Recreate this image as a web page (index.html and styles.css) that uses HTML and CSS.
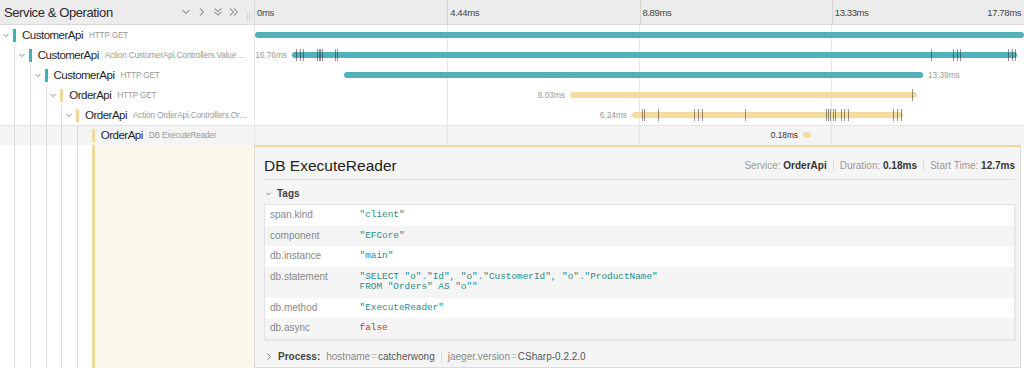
FILE: index.html
```html
<!DOCTYPE html>
<html lang="en">
<head>
    <meta charset="UTF-8">
    <title>Trace timeline</title>
    <link rel="stylesheet" href="styles.css">
</head>
<body>
    <div class="trace">
        <div class="head">
            <div class="head-name">
                <span class="head-title">Service &amp; Operation</span>
                <div class="head-tools">
                    <svg viewBox="0 0 10 10"><polyline points="1.5,3 5,6.5 8.5,3"/></svg>
                    <svg viewBox="0 0 10 10"><polyline points="3,1.5 6.5,5 3,8.5"/></svg>
                    <svg viewBox="0 0 10 10"><polyline points="1.5,1.5 5,4.5 8.5,1.5"/><polyline points="1.5,5 5,8 8.5,5"/></svg>
                    <svg viewBox="0 0 10 10"><polyline points="1,1.5 4.5,5 1,8.5"/><polyline points="5,1.5 8.5,5 5,8.5"/></svg>
                </div>
                <span class="grip"></span>
            </div>
            <div class="head-ticks">
                <div class="tick"><span>0ms</span></div>
                <div class="tick"><span>4.44ms</span></div>
                <div class="tick"><span>8.89ms</span></div>
                <div class="tick"><span>13.33ms</span><span>17.78ms</span></div>
            </div>
        </div>

        <!-- span rows -->
        <div class="row">
            <div class="span-name">
                <span class="toggle"><svg viewBox="0 0 6 5"><polyline points="0.5,1 3,3.6 5.5,1"/></svg></span>
                <span class="accent teal"></span>
                <span class="svc">CustomerApi</span>
                <span class="op">HTTP GET</span>
            </div>
            <div class="timeline">
                <div class="bar teal" style="left: 0%; width: 100%;"></div>
            </div>
        </div>

        <div class="row">
            <div class="span-name">
                <span class="indent"></span>
                <span class="toggle"><svg viewBox="0 0 6 5"><polyline points="0.5,1 3,3.6 5.5,1"/></svg></span>
                <span class="accent teal"></span>
                <span class="svc">CustomerApi</span>
                <span class="op">Action CustomerApi.Controllers.Value…</span>
            </div>
            <div class="timeline">
                <div class="bar teal" style="left: 4.81%; width: 94.28%;">
                    <span class="dur before">16.76ms</span>
                    <i class="log" style="left: 3.7px;"></i>
                    <i class="log" style="left: 7.7px;"></i>
                    <i class="log" style="left: 11.3px;"></i>
                    <i class="log" style="left: 25.5px;"></i>
                    <i class="log" style="left: 27px;"></i>
                    <i class="log" style="left: 28.5px;"></i>
                    <i class="log" style="left: 30px;"></i>
                    <i class="log" style="left: 43.5px;"></i>
                    <i class="log" style="left: 45px;"></i>
                    <i class="log" style="left: 639px;"></i>
                    <i class="log" style="left: 661.3px;"></i>
                    <i class="log" style="left: 664.7px;"></i>
                    <i class="log" style="left: 668px;"></i>
                    <i class="log" style="left: 716.3px;"></i>
                    <i class="log" style="left: 720px;"></i>
                    <i class="log" style="left: 723.5px;"></i>
                </div>
            </div>
        </div>

        <div class="row">
            <div class="span-name">
                <span class="indent"></span><span class="indent"></span>
                <span class="toggle"><svg viewBox="0 0 6 5"><polyline points="0.5,1 3,3.6 5.5,1"/></svg></span>
                <span class="accent teal"></span>
                <span class="svc">CustomerApi</span>
                <span class="op">HTTP GET</span>
            </div>
            <div class="timeline">
                <div class="bar teal" style="left: 11.57%; width: 75.29%;">
                    <span class="dur after">13.39ms</span>
                </div>
            </div>
        </div>

        <div class="row">
            <div class="span-name">
                <span class="indent"></span><span class="indent"></span><span class="indent"></span>
                <span class="toggle"><svg viewBox="0 0 6 5"><polyline points="0.5,1 3,3.6 5.5,1"/></svg></span>
                <span class="accent sand"></span>
                <span class="svc">OrderApi</span>
                <span class="op">HTTP GET</span>
            </div>
            <div class="timeline">
                <div class="bar sand" style="left: 40.96%; width: 45.12%;">
                    <span class="dur before">8.03ms</span>
                    <i class="log" style="left: 341.7px;"></i>
                </div>
            </div>
        </div>

        <div class="row">
            <div class="span-name">
                <span class="indent"></span><span class="indent"></span><span class="indent"></span><span class="indent"></span>
                <span class="toggle"><svg viewBox="0 0 6 5"><polyline points="0.5,1 3,3.6 5.5,1"/></svg></span>
                <span class="accent sand"></span>
                <span class="svc">OrderApi</span>
                <span class="op">Action OrderApi.Controllers.Or…</span>
            </div>
            <div class="timeline">
                <div class="bar sand" style="left: 49.02%; width: 35.24%;">
                    <span class="dur before">6.24ms</span>
                    <i class="log" style="left: 9.7px;"></i>
                    <i class="log" style="left: 12px;"></i>
                    <i class="log" style="left: 26px;"></i>
                    <i class="log" style="left: 62px;"></i>
                    <i class="log" style="left: 66px;"></i>
                    <i class="log" style="left: 70px;"></i>
                    <i class="log" style="left: 113px;"></i>
                    <i class="log" style="left: 194px;"></i>
                    <i class="log" style="left: 196px;"></i>
                    <i class="log" style="left: 198px;"></i>
                    <i class="log" style="left: 201px;"></i>
                    <i class="log" style="left: 203px;"></i>
                    <i class="log" style="left: 209px;"></i>
                    <i class="log" style="left: 212px;"></i>
                    <i class="log" style="left: 216px;"></i>
                    <i class="log" style="left: 261px;"></i>
                    <i class="log" style="left: 265px;"></i>
                    <i class="log" style="left: 269px;"></i>
                </div>
            </div>
        </div>

        <div class="row selected">
            <div class="span-name">
                <span class="indent"></span><span class="indent"></span><span class="indent"></span><span class="indent"></span><span class="indent"></span>
                <span class="toggle"></span>
                <span class="accent sand"></span>
                <span class="svc">OrderApi</span>
                <span class="op">DB ExecuteReader</span>
            </div>
            <div class="timeline">
                <div class="bar sand" style="left: 71.26%; width: 1.04%;">
                    <span class="dur before">0.18ms</span>
                </div>
            </div>
        </div>

        <!-- expanded span detail -->
        <div class="detail">
            <div class="detail-side">
                <span class="indent"></span><span class="indent"></span><span class="indent"></span><span class="indent"></span><span class="indent"></span>
                <span class="side-gap"></span>
                <span class="side-accent"></span>
                <span class="side-fill"></span>
            </div>
            <div class="panel">
                <div class="panel-head">
                    <h2 class="panel-title">DB ExecuteReader</h2>
                    <div class="meta">
                        <span class="meta-item">Service: <b>OrderApi</b></span>
                        <span class="meta-item">Duration: <b>0.18ms</b></span>
                        <span class="meta-item">Start Time: <b>12.7ms</b></span>
                    </div>
                </div>

                <div class="section-head">
                    <svg viewBox="0 0 5 4"><polyline points="0.5,0.7 2.5,3 4.5,0.7"/></svg>
                    Tags
                </div>
                <table class="kv">
                    <tr><td class="key">span.kind</td><td class="val">"client"</td></tr>
                    <tr><td class="key">component</td><td class="val">"EFCore"</td></tr>
                    <tr><td class="key">db.instance</td><td class="val">"main"</td></tr>
                    <tr><td class="key">db.statement</td><td class="val">"SELECT "o"."Id", "o"."CustomerId", "o"."ProductName"
FROM "Orders" AS "o""</td></tr>
                    <tr><td class="key">db.method</td><td class="val">"ExecuteReader"</td></tr>
                    <tr><td class="key">db.async</td><td class="val bool">false</td></tr>
                </table>

                <div class="process">
                    <svg viewBox="0 0 4 7"><polyline points="0.6,0.5 3.4,3.5 0.6,6.5"/></svg>
                    <b>Process:</b>
                    <span class="pair"><span class="k">hostname</span><span class="eq">=</span><span class="v">catcherwong</span></span>
                    <span class="pair"><span class="k">jaeger.version</span><span class="eq">=</span><span class="v">CSharp-0.2.2.0</span></span>
                </div>
            </div>
        </div>
    </div>
</body>
</html>
```

FILE: styles.css
```css
* {
    box-sizing: border-box;
}

body {
    margin: 0;
    background: #fff;
    font-family: "Liberation Sans", Arial, sans-serif;
    color: #333;
    overflow: hidden;
}

.trace {
    width: 1024px;
}

/* header */
.head {
    display: flex;
    height: 25px;
    background: #ececec;
    border-bottom: 1px solid #d9d9d9;
}

.head-name {
    width: 255px;
    flex: none;
    display: flex;
    align-items: center;
    padding-left: 4px;
    border-right: 1px solid #dcdcdc;
}

.head-title {
    font-size: 13px;
    letter-spacing: -0.4px;
    color: #2b2b2b;
}

.head-tools {
    margin-left: auto;
    display: flex;
    gap: 6px;
}

.head-tools svg {
    width: 10px;
    height: 10px;
    fill: none;
    stroke: #9a9a9a;
    stroke-width: 1.1;
}

.grip {
    width: 3px;
    height: 7px;
    border-left: 1px solid #cfcfcf;
    border-right: 1px solid #cfcfcf;
    margin: 0 4px 3px 8px;
    align-self: flex-end;
}

.head-ticks {
    flex: 1;
    display: grid;
    grid-template-columns: repeat(4, 1fr);
}

.tick {
    display: flex;
    align-items: center;
    justify-content: space-between;
    padding: 0 3px 0 2px;
    border-left: 1px solid #d6d6d6;
    font-size: 9.5px;
    letter-spacing: -0.4px;
    color: #444;
}

.tick:first-child {
    border-left: 0;
}

/* span rows */
.row {
    display: flex;
    height: 20px;
}

.row.selected {
    background: #f4f4f4;
    box-shadow: inset 0 1px #e3e3e3;
}

.span-name {
    width: 255px;
    flex: none;
    display: flex;
    align-items: center;
    padding-right: 4px;
    border-right: 1px solid #e6e6e6;
    white-space: nowrap;
    overflow: hidden;
}

.indent {
    width: 15.75px;
    flex: none;
    align-self: stretch;
    background: linear-gradient(#dcdcdc, #dcdcdc) 14px 0 / 1px 100% no-repeat;
}

.toggle {
    width: 13px;
    flex: none;
    display: flex;
    padding-left: 3px;
}

.toggle svg {
    width: 6px;
    height: 5px;
    fill: none;
    stroke: #8c8c8c;
    stroke-width: 1;
}

.accent {
    width: 3px;
    height: 13px;
    flex: none;
    margin-right: 6px;
}

.accent.teal {
    background: #45adb4;
}

.accent.sand {
    background: #f3d79c;
}

.svc {
    font-size: 11.5px;
    letter-spacing: -0.5px;
    color: #1f1f1f;
}

.op {
    min-width: 0;
    margin-left: 6px;
    font-size: 8.2px;
    letter-spacing: -0.15px;
    color: #999;
    overflow: hidden;
    text-overflow: ellipsis;
}

/* timeline */
.timeline {
    flex: 1;
    position: relative;
    background:
        linear-gradient(#e6e6e6, #e6e6e6) 192px 0 / 1px 100% no-repeat,
        linear-gradient(#e6e6e6, #e6e6e6) 384px 0 / 1px 100% no-repeat,
        linear-gradient(#e6e6e6, #e6e6e6) 576px 0 / 1px 100% no-repeat;
}

.bar {
    position: absolute;
    top: 7px;
    height: 6px;
    border-radius: 3px;
}

.bar.teal {
    background: #50b1b8;
}

.bar.sand {
    background: #f4dba4;
}

.dur {
    position: absolute;
    top: -3px;
    line-height: 12px;
    font-size: 8.3px;
    color: #9a9a9a;
    white-space: nowrap;
}

.dur.before {
    right: 100%;
    margin-right: 5px;
}

.dur.after {
    left: 100%;
    margin-left: 5px;
}

.selected .dur {
    color: #333;
}

.log {
    position: absolute;
    top: -3px;
    width: 1px;
    height: 12px;
    background: rgba(40, 40, 40, 0.5);
}

/* detail */
.detail {
    display: flex;
}

.detail-side {
    width: 255px;
    flex: none;
    display: flex;
    border-right: 1px solid #dcdcdc;
}

.side-gap {
    width: 13px;
    flex: none;
}

.side-accent {
    width: 3px;
    flex: none;
    background: #f3d89c;
}

.side-fill {
    flex: 1;
    background: #fbf7eb;
}

.panel {
    flex: 1;
    margin-right: 3px;
    padding: 0 5px 4px 9px;
    background: #f5f5f5;
    border-top: 2px solid #f3d89c;
    border-right: 1px solid #dadada;
    border-bottom: 1px solid #dadada;
}

.panel-head {
    display: flex;
    align-items: center;
    justify-content: space-between;
    padding: 10px 0 4px;
    border-bottom: 1px solid #dedede;
}

.panel-title {
    margin: 0;
    font-size: 15.5px;
    line-height: 18px;
    font-weight: normal;
    color: #222;
}

.meta {
    display: flex;
    align-items: center;
    font-size: 10px;
    line-height: 10px;
    color: #999;
}

.meta b {
    color: #333;
}

.meta-item + .meta-item {
    margin-left: 6px;
    padding-left: 6px;
    border-left: 1px solid #dcdcdc;
}

.section-head {
    display: flex;
    align-items: center;
    margin-top: 8px;
    font-size: 10px;
    line-height: 12px;
    font-weight: bold;
    color: #444;
}

.section-head svg {
    width: 5px;
    height: 4px;
    margin: 0 6px 0 2px;
    fill: none;
    stroke: #888;
    stroke-width: 1;
}

.kv {
    width: 100%;
    margin-top: 4px;
    border-collapse: collapse;
    table-layout: fixed;
    background: #fff;
    border: 1px solid #e2e2e2;
    box-shadow: 1px 1px 2px rgba(0, 0, 0, 0.06);
}

.kv td {
    padding: 5px;
    line-height: 10.5px;
    vertical-align: top;
}

.kv tr:nth-child(even) td {
    background: #f5f5f5;
}

.kv .key {
    width: 90px;
    font-size: 10px;
    color: #888;
}

.kv .val {
    font-family: "Liberation Mono", monospace;
    font-size: 9.4px;
    color: #2c8a8a;
    white-space: pre;
}

.kv td.val.bool {
    color: #cc2f2f;
}

.process {
    display: flex;
    align-items: center;
    margin-top: 11px;
    font-size: 10px;
    line-height: 12px;
}

.process svg {
    width: 4px;
    height: 7px;
    margin: 0 7px 0 3px;
    fill: none;
    stroke: #777;
    stroke-width: 1;
}

.process b {
    color: #444;
    margin-right: 6px;
}

.pair .k {
    color: #888;
}

.pair .eq {
    margin: 0 1px;
    color: #c8c8c8;
}

.pair .v {
    color: #555;
}

.pair + .pair {
    margin-left: 6px;
    padding-left: 6px;
    border-left: 1px solid #dcdcdc;
}
```
